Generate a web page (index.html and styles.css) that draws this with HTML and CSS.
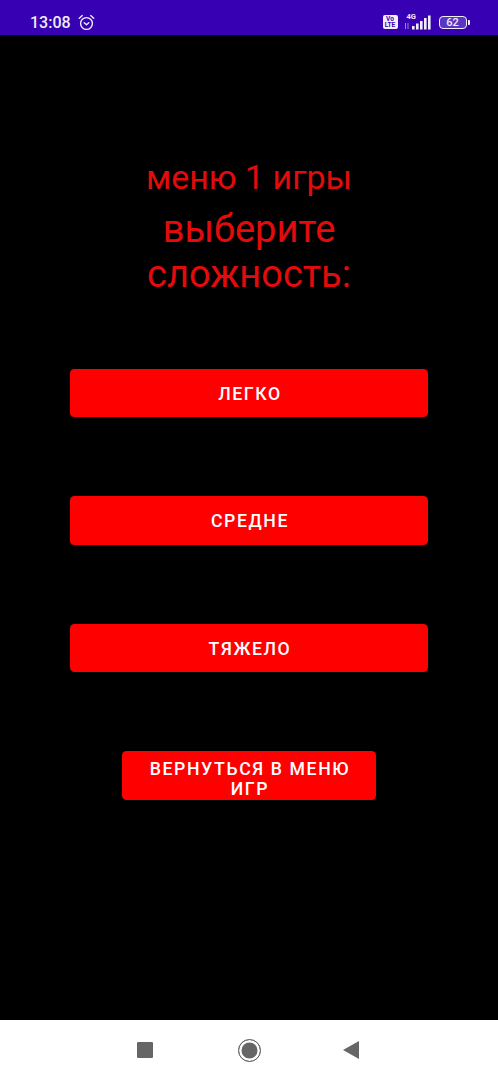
FILE: index.html
```html
<!DOCTYPE html>
<html lang="ru">
<head>
<meta charset="utf-8">
<title>меню 1 игры</title>
<link rel="stylesheet" href="styles.css">
</head>
<body>
<div class="screen">
  <header class="status">
    <div class="status-left">
      <span class="time">13:08</span>
      <svg class="alarm" width="17" height="17" viewBox="0 0 17 17" fill="none" stroke="#f1ecfa" stroke-width="1.4">
        <circle cx="8.5" cy="9.5" r="5.900"/>
        <path d="M1.300 4.300 L4.300 1.600 M15.700 4.300 L12.700 1.600" stroke-linecap="round"/>
        <path d="M6.200 8.800 L8.500 10.800 L10.800 8.800" stroke-linecap="round" stroke-linejoin="round"/>
      </svg>
    </div>
    <div class="status-right">
      <div class="volte"><span>Vo</span><span>LTE</span></div>
      <div class="net">
        <span class="net-4g">4G</span>
        <svg width="27" height="15" viewBox="0 0 27 15" fill="#f1ecfa">
          <rect x="0" y="8" width="1" height="6" opacity=".55"/>
          <rect x="2.500" y="8" width="1" height="6" opacity=".55"/>
          <rect x="7" y="11" width="2.600" height="3.500"/>
          <rect x="11" y="8.500" width="2.600" height="6"/>
          <rect x="15" y="6" width="2.600" height="8.500"/>
          <rect x="19" y="3" width="2.600" height="11.500"/>
          <rect x="23" y="0.500" width="2.600" height="14"/>
        </svg>
      </div>
      <div class="battery"><span class="battery-body">62</span><span class="battery-tip"></span></div>
    </div>
  </header>
  <main class="content">
    <h1 class="title">меню 1 игры</h1>
    <h2 class="subtitle">выберите<br>сложность:</h2>
    <div class="buttons">
      <button class="btn btn-wide">Легко</button>
      <button class="btn btn-wide">Средне</button>
      <button class="btn btn-wide">Тяжело</button>
      <button class="btn btn-small">Вернуться в меню игр</button>
    </div>
  </main>
  <nav class="navbar">
    <span class="nav-square"></span>
    <span class="nav-circle"></span>
    <svg class="nav-back" width="16" height="18" viewBox="0 0 16 18"><path d="M16 0 V18 L0 9 Z" fill="#666"/></svg>
  </nav>
</div>
</body>
</html>
```
FILE: styles.css
```css
* { box-sizing: border-box; }
html, body { margin: 0; padding: 0; background: #000; }
.screen {
  width: 498px;
  height: 1080px;
  display: flex;
  flex-direction: column;
  font-family: Roboto, "Liberation Sans", sans-serif;
  overflow: hidden;
}
.status {
  height: 35px;
  flex: none;
  background: #3700b3;
  color: #f1ecfa;
  display: flex;
  align-items: center;
  justify-content: space-between;
  padding: 9px 28px 0 30px;
}
.status-left { display: flex; align-items: center; gap: 7px; }
.time { font-size: 16px; font-weight: 500; }
.alarm { display: block; }
.status-right { display: flex; align-items: center; }
.volte {
  width: 15px;
  height: 14px;
  background: #f1ecfa;
  color: #3700b3;
  border-radius: 2px;
  font-size: 6.500px;
  font-weight: 700;
  line-height: 6.500px;
  display: flex;
  flex-direction: column;
  align-items: center;
  justify-content: center;
}
.net { position: relative; width: 27px; height: 15px; margin-left: 7px; }
.net svg { display: block; position: absolute; left: 0; top: 0; }
.net-4g { position: absolute; left: 2px; top: -3px; font-size: 7.500px; font-weight: 700; line-height: 9px; }
.battery { display: flex; align-items: center; margin-left: 7px; }
.battery-body {
  width: 28px;
  height: 13px;
  border: 1.300px solid #f1ecfa;
  border-radius: 4px;
  font-size: 11px;
  font-weight: 500;
  line-height: 11px;
  text-align: center;
  background: #5a35c4;
}
.battery-tip { width: 2px; height: 5px; margin-left: 1.500px; background: #f1ecfa; border-radius: 0 1px 1px 0; }
.content {
  flex: 1;
  background: #000;
  display: flex;
  flex-direction: column;
  align-items: center;
  padding-top: 120px;
  text-align: center;
  color: #e30b0b;
}
.title { margin: 0; font-size: 34px; font-weight: 400; line-height: 44px; }
.subtitle { margin: 8px 0 0; font-size: 38px; font-weight: 400; line-height: 45px; }
.buttons {
  margin-top: 71.500px;
  align-self: stretch;
  display: flex;
  flex-direction: column;
  align-items: center;
  gap: 79px;
}
.btn {
  height: 48.500px;
  border: 0;
  border-radius: 4.500px;
  background: #ff0000;
  color: #fff;
  font-family: inherit;
  font-size: 17.700px;
  font-weight: 500;
  letter-spacing: 1.600px;
  line-height: 20px;
  text-transform: uppercase;
  padding: 2px 15px 0 17px;
}
.btn-wide { width: 358px; }
.btn-small { width: 254px; padding-top: 7px; }
.navbar {
  height: 60px;
  flex: none;
  background: #fff;
  display: flex;
  align-items: center;
  padding: 0 139px 0 137px;
  justify-content: space-between;
}
.nav-square { width: 16px; height: 16px; background: #666; border-radius: 1px; }
.nav-circle {
  width: 23px;
  height: 23px;
  margin-left: 2px;
  border-radius: 50%;
  background: #666;
  border: 1.500px solid #666;
  box-shadow: inset 0 0 0 2.500px #fff;
}
.nav-back { display: block; }
```
